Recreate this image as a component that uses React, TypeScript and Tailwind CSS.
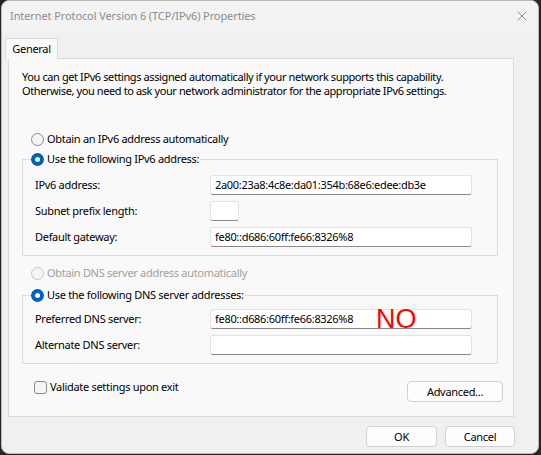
import React from 'react'

const font = { fontFamily: '"Noto Sans", "Liberation Sans", sans-serif' }

function Radio({ checked, disabled, label }: { checked?: boolean; disabled?: boolean; label: string }) {
  return (
    <div className="flex items-center h-[16px]">
      {checked ? (
        <span className="w-[13px] h-[13px] rounded-full bg-[#005fb8] flex items-center justify-center">
          <span className="w-[5px] h-[5px] rounded-full bg-white" />
        </span>
      ) : (
        <span
          className={
            'w-[13px] h-[13px] rounded-full border bg-[#f5f5f5] ' +
            (disabled ? 'border-[#c5c5c5]' : 'border-[#8a8a8a]')
          }
        />
      )}
      <span className={'ml-[3px] whitespace-nowrap ' + (disabled ? 'text-[#a0a0a0]' : 'text-black')}>{label}</span>
    </div>
  )
}

function Field({ label, value, w = 'w-[262px]', extra }: { label: string; value?: string; w?: string; extra?: React.ReactNode }) {
  return (
    <div className="flex items-center h-[20px]">
      <span className="w-[187px] pl-[12px] shrink-0">{label}</span>
      <div className={'relative h-[20px] bg-white border border-[#e3e3e3] border-b-[#8a8a8a] rounded-[3px] px-[4px] flex items-center ' + w}>
        <span className="whitespace-nowrap">{value}</span>
        {extra}
      </div>
    </div>
  )
}

export default function App() {
  return (
    <div className="w-[541px] h-[455px] bg-[#262626] text-[11px] leading-[14px] tracking-[-0.3px] text-black" style={font}>
      <div className="ml-[1px] w-[538px] h-[454px] rounded-[8px] border border-[#b9b9b9] overflow-hidden flex flex-col bg-[#f0f0f0]">
        {/* title bar */}
        <div className="h-[30px] shrink-0 bg-[#f3f3f3] flex items-center justify-between pl-[8px] pr-[10px]">
          <span className="text-[#8c8c8c] tracking-[-0.1px]">Internet Protocol Version 6 (TCP/IPv6) Properties</span>
          <svg width="10" height="10" viewBox="0 0 10 10" className="mr-[1px]">
            <path d="M0.5 0.5 L9.5 9.5 M9.5 0.5 L0.5 9.5" stroke="#8c8c8c" strokeWidth="1" />
          </svg>
        </div>

        {/* body */}
        <div className="flex-1 flex flex-col pl-[6px] pt-[7px]">
          <div className="relative z-10 flex">
            <div className="ml-[-3px] h-[21px] w-[53px] bg-[#f9f9f9] border border-b-0 border-[#d9d9d9] flex items-center justify-center mb-[-1px]">
              General
            </div>
          </div>
          <div className="w-[506px] h-[359px] bg-[#f9f9f9] border border-[#d9d9d9] flex flex-col pl-[13px]">
            <p className="mt-[11px] whitespace-nowrap tracking-[-0.4px]">
              You can get IPv6 settings assigned automatically if your network supports this capability.
              <br />
              Otherwise, you need to ask your network administrator for the appropriate IPv6 settings.
            </p>

            <div className="mt-[33px] ml-[9px]">
              <Radio label="Obtain an IPv6 address automatically" />
            </div>

            <fieldset className="mt-[4px] w-[476px] border border-[#dcdcdc] pb-[8px]">
              <legend className="ml-[8px] pr-[1px]">
                <Radio checked label="Use the following IPv6 address:" />
              </legend>
              <div className="flex flex-col gap-[6px] mt-[8px]">
                <Field label="IPv6 address:" value="2a00:23a8:4c8e:da01:354b:68e6:edee:db3e" />
                <Field label="Subnet prefix length:" w="w-[29px]" />
                <Field label="Default gateway:" value="fe80::d686:60ff:fe66:8326%8" />
              </div>
            </fieldset>

            <div className="mt-[9px] ml-[9px]">
              <Radio disabled label="Obtain DNS server address automatically" />
            </div>

            <fieldset className="mt-[6px] w-[476px] border border-[#dcdcdc] pb-[8px]">
              <legend className="ml-[8px] pr-[1px]">
                <Radio checked label="Use the following DNS server addresses:" />
              </legend>
              <div className="flex flex-col gap-[6px] mt-[6px]">
                <Field
                  label="Preferred DNS server:"
                  value="fe80::d686:60ff:fe66:8326%8"
                  extra={
                    <span
                      className="absolute left-[165px] top-[-3px] text-[27px] leading-[24px] tracking-normal text-[#ff0000]"
                      style={{ fontFamily: '"Liberation Sans", sans-serif' }}
                    >
                      NO
                    </span>
                  }
                />
                <Field label="Alternate DNS server:" />
              </div>
            </fieldset>

            <div className="mt-[16px] flex items-start justify-between w-[481px]">
              <div className="flex items-center ml-[12px]">
                <span className="w-[13px] h-[13px] rounded-[3px] border border-[#8a8a8a] bg-[#f5f5f5]" />
                <span className="ml-[3px]">Validate settings upon exit</span>
              </div>
              <button className="mt-[1px] w-[96px] h-[21px] bg-[#fdfdfd] border border-[#d0d0d0] rounded-[4px] flex items-center justify-center">
                Advanced...
              </button>
            </div>
          </div>

          <div className="flex justify-end gap-[8px] mt-[9px] pr-[23px]">
            <button className="w-[71px] h-[21px] bg-[#fdfdfd] border border-[#d0d0d0] rounded-[4px] flex items-center justify-center">
              OK
            </button>
            <button className="w-[70px] h-[21px] bg-[#fdfdfd] border border-[#d0d0d0] rounded-[4px] flex items-center justify-center">
              Cancel
            </button>
          </div>
        </div>
      </div>
    </div>
  )
}
